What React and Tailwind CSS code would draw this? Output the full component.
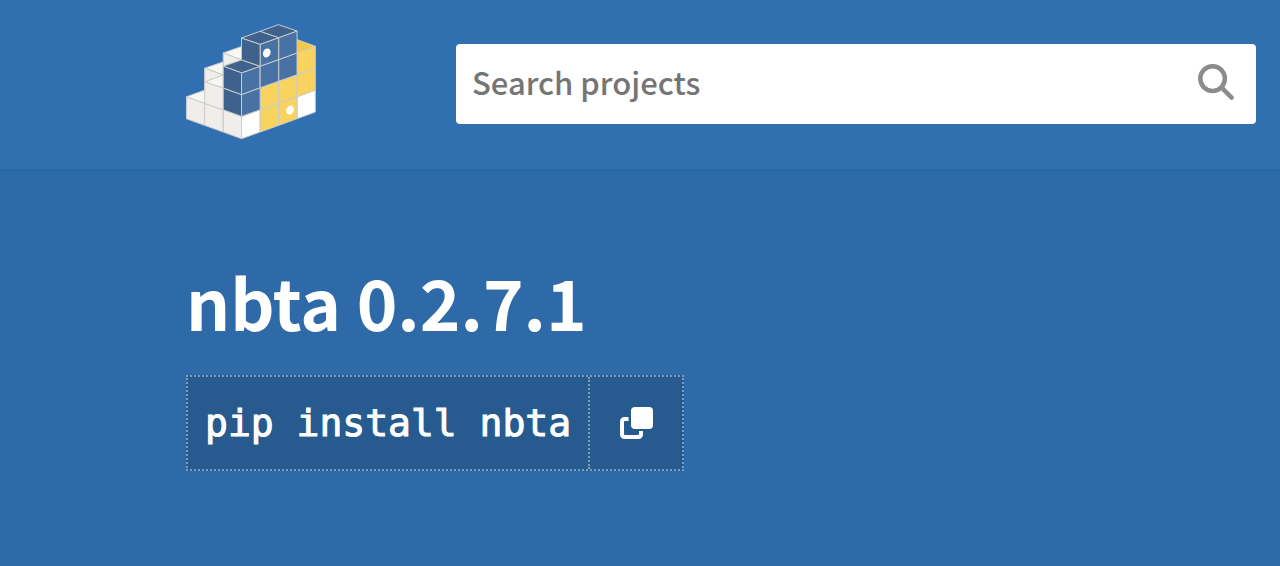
import React, { useState } from 'react';

const INSTALL_COMMAND = 'pip install nbta';

function Logo() {
  return (
    <svg viewBox="18 23 391 346" className="w-[130px] h-[115px]" role="img" aria-label="PyPI">
      <g stroke="#cccccc" strokeWidth="3" strokeLinejoin="round">
        {/* white steps */}
        <g fill="#f7f7f4">
          <path d="M19 242 L74 222 L130 281 L74 262 Z" />
          <path d="M74 156 L130 137 V176 Z" />
          <path d="M74 197 L130 176 V216 Z" />
          <path d="M130 110 L185 91 V131 Z" />
        </g>
        <g fill="#efeeea">
          <path d="M19 242 L74 262 V328 L19 308 Z" />
          <path d="M74 262 L130 281 V348 L74 328 Z" />
          <path d="M130 281 L185 301 V368 L130 348 Z" />
          <path d="M74 197 L130 216 V281 L74 262 Z" />
          <path d="M74 156 L130 176 L74 197 Z" />
          <path d="M130 110 L185 131 L130 150 Z" />
        </g>
        <g fill="#ffffff">
          <path d="M185 301 L241 281 V348 L185 368 Z" />
          <path d="M352 242 L407 222 V288 L352 308 Z" />
        </g>
        {/* yellow */}
        <g fill="#f8d35e">
          <path d="M241 281 L297 261 V328 L241 348 Z" />
          <path d="M297 261 L352 242 V308 L297 328 Z" />
          <path d="M241 215 L297 195 V261 L241 281 Z" />
          <path d="M297 195 L352 176 V242 L297 261 Z" />
          <path d="M352 176 L407 156 V222 L352 242 Z" />
          <path d="M352 110 L407 90 V156 L352 176 Z" />
        </g>
        <path fill="#f6c744" d="M352 70 L407 90 L352 110 Z" />
        {/* blue */}
        <g fill="#4872a4">
          <path d="M185 170 L241 150 V215 L185 236 Z" />
          <path d="M185 236 L241 215 V281 L185 301 Z" />
          <path d="M241 150 L297 130 V195 L241 215 Z" />
          <path d="M297 130 L352 110 V176 L297 195 Z" />
          <path d="M241 84 L297 64 V130 L241 150 Z" />
          <path d="M297 64 L352 44 V110 L297 130 Z" />
        </g>
        <g fill="#3e628c">
          <path d="M130 150 L185 131 L241 150 L185 170 Z" />
          <path d="M130 150 L185 170 V236 L130 216 Z" />
          <path d="M130 216 L185 236 V301 L130 281 Z" />
          <path d="M185 65 L241 84 V150 L185 131 Z" />
          <path d="M185 65 L241 45 L297 64 L241 84 Z" />
          <path d="M241 45 L296 25 L352 44 L297 64 Z" />
        </g>
      </g>
      <g fill="#ffffff">
        <ellipse cx="261" cy="110" rx="11" ry="14" transform="rotate(25 261 110)" />
        <ellipse cx="331" cy="282" rx="11" ry="14" transform="rotate(25 331 282)" />
      </g>
    </svg>
  );
}

function SearchIcon() {
  return (
    <svg viewBox="0 0 36 36" className="w-9 h-9" fill="none" stroke="currentColor" strokeWidth="4.5" strokeLinecap="round" aria-hidden="true">
      <circle cx="14.6" cy="14.6" r="12.3" />
      <path d="M23.8 23.8 L33.6 33.6" />
    </svg>
  );
}

function CopyIcon() {
  return (
    <svg viewBox="0 0 33 33" className="w-[33px] h-[33px]" aria-hidden="true">
      <rect x="11" y="0" width="22" height="22" rx="4" fill="currentColor" />
      <path d="M8.5 12 H5 Q2 12 2 15 V27 Q2 30 5 30 H18 Q21 30 21 27 V24" fill="none" stroke="currentColor" strokeWidth="4" />
    </svg>
  );
}

export default function App() {
  const [search, setSearch] = useState('');

  const handleCopy = () => {
    navigator.clipboard?.writeText(INSTALL_COMMAND);
  };

  return (
    <div className="min-h-screen bg-[#2f6aa8] text-white font-['Noto_Sans_CJK_SC',sans-serif]">
      {/* Header */}
      <header className="flex items-center gap-[140px] pl-[186px] pr-6 pt-6 pb-[30px] bg-[#3070b1] border-b-2 border-[#2d67a3]">
        <a href="/" className="shrink-0">
          <Logo />
        </a>
        <form
          role="search"
          onSubmit={(e) => e.preventDefault()}
          className="flex flex-1 min-w-0 items-center h-20 mt-1 pb-1 bg-white rounded"
        >
          <input
            type="text"
            aria-label="Search projects"
            placeholder="Search projects"
            value={search}
            onChange={(e) => setSearch(e.target.value)}
            className="flex-1 min-w-0 h-full px-4 text-[31px] font-medium text-gray-800 placeholder-[#757575] focus:outline-none"
          />
          <button type="submit" aria-label="Search" className="px-[22px] text-[#8c8c8c]">
            <SearchIcon />
          </button>
        </form>
      </header>

      {/* Package banner */}
      <main className="pl-[186px] pr-6 pt-[84px] pb-24">
        <h1 className="text-[69px] leading-[92px] font-bold">nbta 0.2.7.1</h1>
        <div className="inline-flex mt-7 h-24 bg-[#275b8f] border-2 border-dotted border-[#7d9dbc]">
          <code className="flex items-center px-[17px] text-[38px] whitespace-pre font-['DejaVu_Sans_Mono',monospace] [-webkit-text-stroke:1px_white]">
            {INSTALL_COMMAND}
          </code>
          <button
            type="button"
            onClick={handleCopy}
            aria-label="Copy install command"
            className="flex items-center justify-center w-[94px] border-l-2 border-dotted border-[#7d9dbc]"
          >
            <CopyIcon />
          </button>
        </div>
      </main>
    </div>
  );
}
